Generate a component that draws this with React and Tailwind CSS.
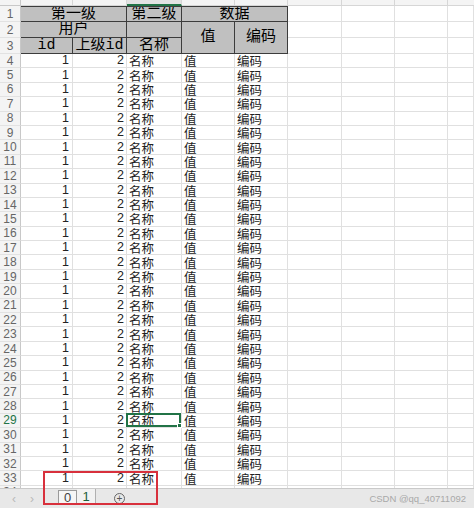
import React from "react";

const COLS = "grid grid-cols-[21px_52px_54px_55px_53px_53px_54px_53px_53px_26px]";
const gray = "bg-[#c0c0c0] border-r border-b border-[#3c3c3c] flex items-center justify-center text-[15px] text-[#000] leading-[15px] overflow-hidden";
const emptyCell = "border-r border-b border-[#e0e0e0]";
const rh = "bg-[#f4f4f4] border-r border-b border-r-[#c8c8c8] border-b-[#e2e2e2] flex items-center justify-center text-[12px] leading-[12px] text-[#666]";
const hdrFont = { fontFamily: '"Liberation Mono", "Noto Sans CJK SC", monospace' };
const numFont = { fontFamily: '"Liberation Sans", sans-serif' };

function HeaderRows() {
  return (
    <div className={`${COLS} grid-rows-[16px_16px_16px] shrink-0`} style={hdrFont}>
      <div className={`${rh} col-start-1 row-start-1`} style={numFont}>1</div>
      <div className={`${rh} col-start-1 row-start-2`} style={numFont}>2</div>
      <div className={`${rh} col-start-1 row-start-3`} style={numFont}>3</div>

      <div className={`${gray} border-t col-start-2 col-span-2 row-start-1`}>第一级</div>
      <div className={`${gray} border-t col-start-4 row-start-1`}>第二级</div>
      <div className={`${gray} border-t col-start-5 col-span-2 row-start-1`}>数据</div>

      <div className={`${gray} col-start-2 col-span-2 row-start-2`}>用户</div>
      <div className={`${gray} col-start-4 row-start-2`}></div>
      <div className={`${gray} col-start-5 row-start-2 row-span-2`}>值</div>
      <div className={`${gray} col-start-6 row-start-2 row-span-2`}>编码</div>

      <div className={`${gray} col-start-2 row-start-3`}>id</div>
      <div className={`${gray} col-start-3 row-start-3`}>上级id</div>
      <div className={`${gray} col-start-4 row-start-3`}>名称</div>

      {[1, 2, 3].map((r) =>
        [7, 8, 9, 10].map((c) => (
          <div
            key={`${r}-${c}`}
            className={emptyCell}
            style={{ gridColumnStart: c, gridRowStart: r }}
          />
        ))
      )}
    </div>
  );
}

function DataRow({ n }) {
  const sel = n === 29;
  const sans = { fontFamily: '"Liberation Sans", "Noto Sans CJK SC", sans-serif' };
  const cjk = { fontFamily: '"Noto Sans CJK SC", sans-serif' };
  const has = n <= 33;
  return (
    <div className={`${COLS} h-[14.4px] shrink-0 text-[12.5px] leading-[13px] text-[#222]`}>
      <div className={`${rh} ${sel ? "text-[#217346] bg-[#e2e2e2]" : ""}`} style={numFont}>
        {n}
      </div>
      <div className={`${emptyCell} flex items-center justify-end pr-[3px]`} style={sans}>
        {has ? "1" : ""}
      </div>
      <div className={`${emptyCell} flex items-center justify-end pr-[2px]`} style={sans}>
        {has ? "2" : ""}
      </div>
      <div className={`${emptyCell} relative flex items-center pl-[2px]`} style={cjk}>
        {has ? "名称" : ""}
        {sel && (
          <div className="absolute -left-px -top-px right-0 bottom-0 border-2 border-[#217346]">
            <div className="absolute -right-[3px] -bottom-[3px] w-[5px] h-[5px] bg-[#217346] border border-white" />
          </div>
        )}
      </div>
      <div className={`${emptyCell} flex items-center pl-[2px]`} style={cjk}>
        {has ? "值" : ""}
      </div>
      <div className={`${emptyCell} flex items-center pl-[2px]`} style={cjk}>
        {has ? "编码" : ""}
      </div>
      <div className={emptyCell} />
      <div className={emptyCell} />
      <div className={emptyCell} />
      <div className={emptyCell} />
    </div>
  );
}

export default function App() {
  const rows = [];
  for (let i = 4; i <= 34; i++) rows.push(i);
  return (
    <div
      className="relative w-[474px] h-[508px] overflow-hidden bg-white"
      style={{ fontFamily: '"Liberation Sans", "Noto Sans CJK SC", sans-serif' }}
    >
      <div className="h-[488px] overflow-hidden flex flex-col">
        {/* column letters strip (mostly cut off) */}
        <div className={`${COLS} h-[6px] shrink-0 bg-[#f4f4f4]`}>
          <div className="border-r border-b border-[#c8c8c8]" />
          <div className="border-r border-b border-[#d6d6d6]" />
          <div className="border-r border-b border-[#d6d6d6]" />
          <div className="border-r border-[#d6d6d6] border-b-2 border-b-[#217346] bg-[#e2e2e2]" />
          <div className="border-r border-b border-[#d6d6d6]" />
          <div className="border-r border-b border-[#d6d6d6]" />
          <div className="border-r border-b border-[#d6d6d6]" />
          <div className="border-r border-b border-[#d6d6d6]" />
          <div className="border-r border-b border-[#d6d6d6]" />
          <div className="border-b border-[#d6d6d6]" />
        </div>
        <HeaderRows />
        {rows.map((n) => (
          <DataRow key={n} n={n} />
        ))}
      </div>

      {/* sheet tab bar */}
      <div className="h-[20px] flex items-stretch bg-[#e8e8e8] border-t border-[#c9c9c9] text-[#444]">
        <div className="w-[58px] flex items-center text-[12px] leading-[12px] text-[#b8b8b8]">
          <span className="ml-[12px]">‹</span>
          <span className="ml-[14px]">›</span>
        </div>
        <div className="w-[19px] h-[14px] mt-[1px] flex items-center justify-center border border-[#9a9a9a] bg-[#f6f6f6] text-[13px] leading-[13px]">
          0
        </div>
        <div className="w-[19px] h-[16px] flex items-center justify-center border-b-2 border-[#217346] border-r border-r-[#b0b0b0] bg-[#f2f2f2] text-[13px] leading-[13px] text-[#1f5f3a]">
          1
        </div>
        <div className="w-[47px] flex items-center justify-center">
          <div className="w-[11px] h-[11px] rounded-full border border-[#666] flex items-center justify-center text-[10px] leading-none text-[#555]">
            +
          </div>
        </div>
        <div className="flex-1 flex items-center justify-end pr-[8px] text-[9.5px] leading-[10px] text-[#a8a8a8]">
          CSDN @qq_40711092
        </div>
      </div>

      {/* red annotation box */}
      <div className="absolute left-[43px] top-[471px] w-[115px] h-[34px] border-2 border-[#d8303c]" />
    </div>
  );
}
